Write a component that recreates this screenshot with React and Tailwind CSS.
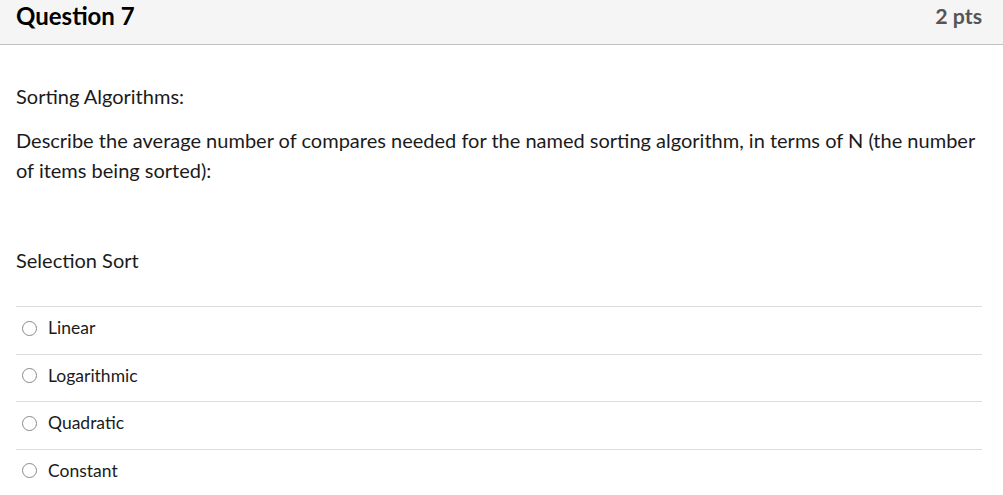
import React from 'react';

const options = ['Linear', 'Logarithmic', 'Quadratic', 'Constant'];

export default function App() {
  return (
    <div className="min-h-screen bg-white text-[#1b1b1b]" style={{ fontFamily: 'Lato, "Open Sans", sans-serif' }}>
      {/* Header */}
      <header className="h-[45px] bg-[#f5f5f5] border-b border-[#c3c3c3] flex items-start justify-between pl-4 pr-[21px] pt-[1px]">
        <h2 className="text-[24px] leading-[30px] font-bold text-black">Question 7</h2>
        <span className="text-[21.3px] leading-[30px] font-bold text-[#555]">2 pts</span>
      </header>

      {/* Body */}
      <div className="pl-4 pr-[21px]">
        <p className="mt-[36px] text-[20px] leading-[30px]">Sorting Algorithms:</p>
        <p className="mt-[14px] text-[20px] leading-[30px]">
          Describe the average number of compares needed for the named sorting algorithm, in terms of N (the number of items being sorted):
        </p>
        <p className="mt-[60px] text-[20px] leading-[30px]">Selection Sort</p>

        <ul className="mt-[31px]">
          {options.map((opt) => (
            <li key={opt} className="h-[47.6px] border-t border-[#dcdcdc] flex items-start pt-[11px]">
              <label className="flex items-center">
                <span className="ml-[6px] w-[15px] h-[15px] rounded-full border border-[#8a8a8a] bg-white inline-block" />
                <span className="ml-[11px] text-[17.5px] leading-[20px]">{opt}</span>
              </label>
            </li>
          ))}
        </ul>
      </div>
    </div>
  );
}
